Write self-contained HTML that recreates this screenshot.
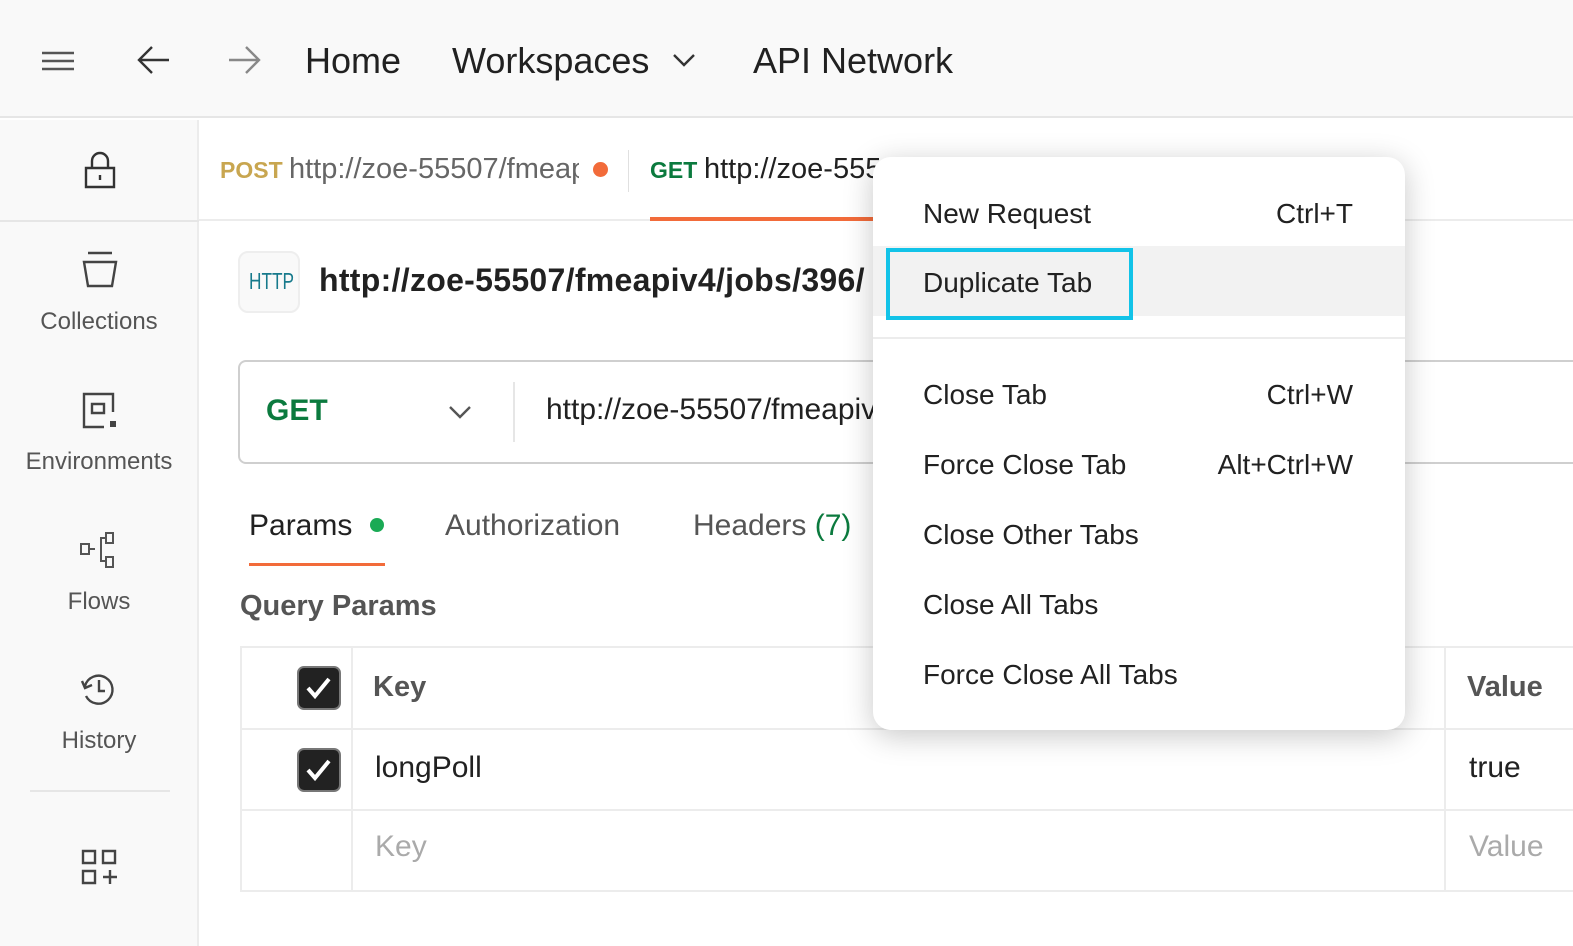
<!DOCTYPE html><html><head><style>
*{box-sizing:border-box;margin:0;padding:0}
body{width:1573px;height:946px;overflow:hidden;background:#fff;font-family:"Liberation Sans",sans-serif;color:#212121;position:relative}
.a{position:absolute;white-space:nowrap}
svg{position:absolute;fill:none;stroke:#333;stroke-width:2.4}
.sl{position:absolute;width:198px;text-align:center;font-size:24px;color:#555}
.mi{position:absolute;left:50px;font-size:28px;color:#212121}
.mk{position:absolute;right:52px;font-size:28px;color:#212121}
</style></head><body>
<div class="a" style="left:0;top:0;width:1573px;height:118px;background:#f9f9f9;border-bottom:2px solid #e6e6e6"></div>
<div class="a" style="left:0;top:120px;width:199px;height:826px;background:#f9f9f9;border-right:2px solid #ececec"></div>
<div class="a" style="left:0;top:220px;width:199px;height:2px;background:#e6e6e6"></div>
<svg style="left:40px;top:50px" width="36" height="22"><path d="M2 3h32M2 11h32M2 19h32" stroke="#555"/></svg>
<svg style="left:136px;top:44px" width="36" height="32"><path d="M33 16H4M16 3 3 16l13 13"/></svg>
<svg style="left:226px;top:44px" width="36" height="32" ><path d="M3 16h29M20 3l13 13-13 13" stroke="#888"/></svg>
<div class="a" style="left:305px;top:40px;font-size:36px">Home</div>
<div class="a" style="left:452px;top:40px;font-size:36px">Workspaces</div>
<svg style="left:672px;top:52px" width="24" height="16"><path d="M2 3l10 10 10-10"/></svg>
<div class="a" style="left:753px;top:40px;font-size:36px">API Network</div>
<!-- sidebar -->
<svg style="left:82px;top:150px" width="36" height="40"><path d="M10 18V11a8 8 0 0 1 16 0v7M4 18h28v19H4zM18 25v5"/></svg>
<svg style="left:80px;top:250px" width="40" height="40"><path d="M8 3h24M4 12h32l-4 24H8z" stroke="#444"/></svg>
<div class="sl" style="top:308px">Collections</div>
<svg style="left:80px;top:390px" width="40" height="40"><path d="M33 22V4H4v33h20M12 14h12v9H12z" stroke="#444"/><rect x="30" y="31" width="6" height="6" fill="#444" stroke="none"/></svg>
<div class="sl" style="top:448px">Environments</div>
<svg style="left:78px;top:530px" width="42" height="40"><path d="M3 14h8v10H3zM28 3h7v10h-7zM28 27h7v10h-7zM11 19h6M28 8h-5v23h5" stroke="#555" stroke-width="2"/></svg>
<div class="sl" style="top:588px">Flows</div>
<svg style="left:78px;top:670px" width="42" height="42"><path d="M8 26a14 14 0 1 0-1-10M4 11l3 7 7-3M21 10v11h6" stroke="#444"/></svg>
<div class="sl" style="top:727px">History</div>
<div class="a" style="left:30px;top:790px;width:140px;height:2px;background:#e6e6e6"></div>
<svg style="left:80px;top:848px" width="40" height="40"><path d="M3 3h12v12H3zM23 3h12v12H23zM3 23h12v12H3zM23 29h14M30 22v14" stroke="#444"/></svg>
<!-- tabs -->
<div class="a" style="left:199px;top:219px;width:1374px;height:2px;background:#ececec"></div>
<div class="a" style="left:220px;top:157px;font-size:23px;font-weight:bold;color:#c8a650">POST</div>
<div class="a" style="left:289px;top:153px;font-size:29px;color:#666;width:290px;overflow:hidden">http://zoe-55507/fmeapiv4</div>
<div class="a" style="left:593px;top:162px;width:15px;height:15px;border-radius:50%;background:#f26b3a"></div>
<div class="a" style="left:628px;top:150px;width:1px;height:42px;background:#e0e0e0"></div>
<div class="a" style="left:650px;top:157px;font-size:23px;font-weight:bold;color:#0b7a3e">GET</div>
<div class="a" style="left:704px;top:153px;font-size:29px;color:#212121">http://zoe-55507</div>
<div class="a" style="left:650px;top:217px;width:230px;height:4px;background:#f26b3a"></div>
<!-- title -->
<div class="a" style="left:238px;top:251px;width:62px;height:62px;border:2px solid #eee;border-radius:10px;background:#f9f9f9"></div>
<div class="a" style="left:249px;top:268px;font-size:23px;color:#177a8c;transform:scaleX(.75);transform-origin:left">HTTP</div>
<div class="a" style="left:319px;top:262px;font-size:32px;font-weight:bold;letter-spacing:0.3px">http://zoe-55507/fmeapiv4/jobs/396/</div>
<!-- url bar -->
<div class="a" style="left:238px;top:360px;width:1400px;height:104px;border:2px solid #cfcfcf;border-radius:8px"></div>
<div class="a" style="left:266px;top:394px;font-size:30px;font-weight:bold;color:#0b7a3e">GET</div>
<svg style="left:448px;top:404px" width="24" height="16"><path d="M2 3l10 10 10-10" stroke="#555"/></svg>
<div class="a" style="left:513px;top:382px;width:2px;height:60px;background:#e6e6e6"></div>
<div class="a" style="left:546px;top:393px;font-size:30px">http://zoe-55507/fmeapiv4</div>
<!-- params tabs -->
<div class="a" style="left:249px;top:509px;font-size:30px">Params</div>
<div class="a" style="left:370px;top:518px;width:14px;height:14px;border-radius:50%;background:#1aaa55"></div>
<div class="a" style="left:249px;top:563px;width:136px;height:3px;background:#f26b3a"></div>
<div class="a" style="left:445px;top:509px;font-size:30px;color:#555">Authorization</div>
<div class="a" style="left:693px;top:509px;font-size:30px;color:#555">Headers <span style="color:#0b7a3e">(7)</span></div>
<div class="a" style="left:240px;top:590px;font-size:29px;font-weight:bold;color:#555">Query Params</div>
<!-- table -->
<div class="a" style="left:240px;top:646px;width:1340px;height:246px;border:2px solid #ececec"></div>
<div class="a" style="left:240px;top:728px;width:1340px;height:2px;background:#ececec"></div>
<div class="a" style="left:240px;top:809px;width:1340px;height:2px;background:#ececec"></div>
<div class="a" style="left:351px;top:646px;width:2px;height:246px;background:#ececec"></div>
<div class="a" style="left:1444px;top:646px;width:2px;height:246px;background:#ececec"></div>
<div class="a" style="left:297px;top:666px;width:44px;height:44px;border-radius:7px;background:#222;border:2px solid #777"></div>
<svg style="left:303px;top:674px" width="32" height="28"><path d="M5 14l7 8L26 5" stroke="#fff" stroke-width="4"/></svg>
<div class="a" style="left:297px;top:748px;width:44px;height:44px;border-radius:7px;background:#222;border:2px solid #777"></div>
<svg style="left:303px;top:756px" width="32" height="28"><path d="M5 14l7 8L26 5" stroke="#fff" stroke-width="4"/></svg>
<div class="a" style="left:373px;top:671px;font-size:29px;font-weight:bold;color:#555">Key</div>
<div class="a" style="left:375px;top:751px;font-size:30px">longPoll</div>
<div class="a" style="left:375px;top:830px;font-size:30px;color:#aaa">Key</div>
<div class="a" style="left:1467px;top:671px;font-size:29px;font-weight:bold;color:#555">Value</div>
<div class="a" style="left:1469px;top:751px;font-size:30px">true</div>
<div class="a" style="left:1469px;top:830px;font-size:30px;color:#aaa">Value</div>
<!-- menu -->
<div class="a" style="left:873px;top:157px;width:532px;height:573px;background:#fff;border-radius:18px;box-shadow:0 6px 30px rgba(0,0,0,.22)">
<div class="mi" style="top:41px">New Request</div><div class="mk" style="top:41px">Ctrl+T</div>
<div class="a" style="left:0;top:89px;width:532px;height:70px;background:#f2f2f2"></div>
<div class="a" style="left:13px;top:91px;width:247px;height:72px;border:4px solid #12c3e8"></div>
<div class="mi" style="top:110px">Duplicate Tab</div>
<div class="a" style="left:0;top:180px;width:532px;height:2px;background:#ececec"></div>
<div class="mi" style="top:222px">Close Tab</div><div class="mk" style="top:222px">Ctrl+W</div>
<div class="mi" style="top:292px">Force Close Tab</div><div class="mk" style="top:292px">Alt+Ctrl+W</div>
<div class="mi" style="top:362px">Close Other Tabs</div>
<div class="mi" style="top:432px">Close All Tabs</div>
<div class="mi" style="top:502px">Force Close All Tabs</div>
</div>
</body></html>
